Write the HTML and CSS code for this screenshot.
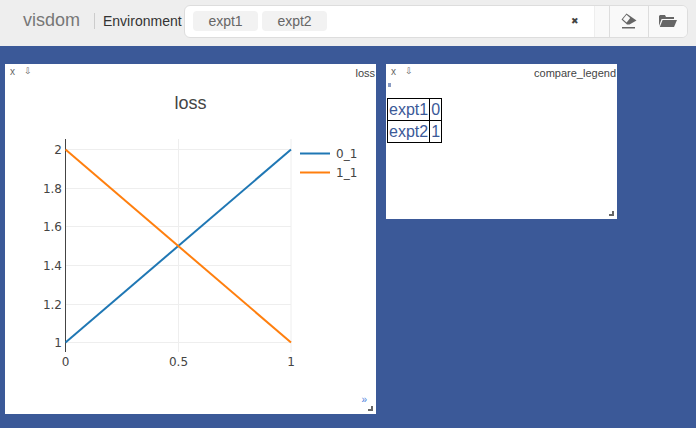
FILE: index.html
```html
<!DOCTYPE html>
<html>
<head>
	<meta charset="UTF-8">
	<title>visdom</title>
	<link rel="stylesheet" href="styles.css">
</head>
<body>
	<div class="navbar">
		<span class="brand">visdom</span>
		<span class="divider"></span>
		<span class="env-label">Environment</span>
		<div class="env-select">
			<div class="chips">
				<span class="chip">expt1</span>
				<span class="chip">expt2</span>
			</div>
			<span class="clear">&#10006;</span>
			<span class="gap-btn"></span>
			<button class="tool-btn">
				<svg width="18" height="18" viewBox="0 0 18 18">
					<path d="M6.5 1.5 L1.5 7.5 L7 12.5 L9.5 12.5 L16.5 8.5 Z" fill="#666"/>
					<path d="M6.5 2.8 L2.9 7.2 L6.6 10.4 L10.2 6 Z" fill="#f8f8f8"/>
					<rect x="2" y="15" width="13" height="1.5" fill="#666"/>
				</svg>
			</button>
			<button class="tool-btn">
				<svg width="20" height="18" viewBox="0 0 20 18">
					<path d="M1 4 L1 14 L3.6 7 L16 7 L16 5 L8 5 L7 3 L2 3 Z" fill="#666"/>
					<path d="M4.6 8 L19 8 L16 15 L1.8 15 Z" fill="#666"/>
				</svg>
			</button>
		</div>
	</div>

	<div class="desktop">
		<div class="pane pane-plot">
			<div class="pane-bar">
				<span class="pane-x">x</span>
				<span class="pane-save">&#8681;</span>
				<span class="pane-title">loss</span>
			</div>
			<svg class="plot" width="371" height="350" viewBox="0 0 371 350">
				<text class="plot-title" x="185.500" y="45" text-anchor="middle">loss</text>

				<!-- grid -->
				<g class="grid">
					<line x1="173.500" y1="75" x2="173.500" y2="288"/>
					<line x1="286" y1="75" x2="286" y2="288"/>
					<line x1="60" y1="85.500" x2="286" y2="85.500"/>
					<line x1="60" y1="124.500" x2="286" y2="124.500"/>
					<line x1="60" y1="162.500" x2="286" y2="162.500"/>
					<line x1="60" y1="201.500" x2="286" y2="201.500"/>
					<line x1="60" y1="240.500" x2="286" y2="240.500"/>
					<line x1="60" y1="278.500" x2="286" y2="278.500"/>
				</g>
				<line class="axis" x1="60.500" y1="75" x2="60.500" y2="288"/>

				<!-- traces -->
				<line class="trace-blue" x1="60.500" y1="278.500" x2="286" y2="85.500"/>
				<line class="trace-orange" x1="60.500" y1="85.500" x2="286" y2="278.500"/>

				<!-- ticks -->
				<g class="tick" text-anchor="end">
					<text x="57" y="90">2</text>
					<text x="57" y="129">1.8</text>
					<text x="57" y="167">1.6</text>
					<text x="57" y="206">1.4</text>
					<text x="57" y="245">1.2</text>
					<text x="57" y="283">1</text>
				</g>
				<g class="tick" text-anchor="middle">
					<text x="60.500" y="302">0</text>
					<text x="173.500" y="302">0.5</text>
					<text x="286" y="302">1</text>
				</g>

				<!-- legend -->
				<line class="trace-blue" x1="295" y1="89.500" x2="325" y2="89.500"/>
				<line class="trace-orange" x1="295" y1="108.500" x2="325" y2="108.500"/>
				<text class="tick" x="331" y="94">0_1</text>
				<text class="tick" x="331" y="113">1_1</text>
			</svg>
			<span class="more">&raquo;</span>
			<span class="resize"></span>
		</div>

		<div class="pane pane-legend">
			<div class="pane-bar">
				<span class="pane-x">x</span>
				<span class="pane-save">&#8681;</span>
				<span class="pane-title">compare_legend</span>
			</div>
			<div class="pane-body">
				<span class="dot"></span>
				<table class="compare">
					<tr><td>expt1</td><td>0</td></tr>
					<tr><td>expt2</td><td>1</td></tr>
				</table>
			</div>
			<span class="resize"></span>
		</div>
	</div>
</body>
</html>
```

FILE: styles.css
```css
html, body {
	margin: 0;
	height: 100%;
}
body {
	font-family: "Liberation Sans", Arial, sans-serif;
	background-color: #3b5998;
	overflow: hidden;
}

/* Top bar */
.navbar {
	display: flex;
	align-items: center;
	height: 46px;
	box-sizing: border-box;
	padding: 0 8px 5px 23px;
	background-color: #eeeeee;
}
.brand {
	font-size: 18px;
	color: #777;
	width: 71px;
}
.divider {
	width: 1px;
	height: 16px;
	background-color: #ccc;
}
.env-label {
	font-size: 14px;
	color: #333;
	margin: 0 4px 0 8px;
	width: 77px;
}
.env-select {
	display: flex;
	align-items: stretch;
	flex: 1;
	height: 33px;
	margin-top: 1px;
	box-sizing: border-box;
	border: 1px solid #ddd;
	border-radius: 6px;
	background-color: #fff;
	overflow: hidden;
}
.chips {
	display: flex;
	align-items: center;
	gap: 4px;
	flex: 1;
	padding-left: 8px;
}
.chip {
	width: 65px;
	height: 20px;
	line-height: 20px;
	text-align: center;
	font-size: 14px;
	color: #666;
	background-color: #f2f2f2;
	border-radius: 4px;
}
.clear {
	align-self: center;
	width: 23px;
	font-size: 9px;
	color: #444;
}
.gap-btn {
	width: 14px;
	background-color: #f9f9f9;
	border-left: 1px solid #eee;
}
.tool-btn {
	width: 39px;
	padding: 0;
	border: none;
	border-left: 1px solid #ddd;
	background-color: #f9f9f9;
	display: flex;
	align-items: center;
	justify-content: center;
}

/* Panes */
.desktop {
	display: flex;
	align-items: flex-start;
	gap: 10px;
	padding: 18px 5px 0;
}
.pane {
	position: relative;
	background-color: #fff;
}
.pane-plot {
	width: 371px;
	height: 350px;
}
.pane-legend {
	width: 231px;
	height: 155px;
}
.pane-bar {
	position: absolute;
	top: 0;
	left: 0;
	right: 0;
	display: flex;
	align-items: center;
	height: 14px;
	font-size: 10px;
	color: #666;
}
.pane-x {
	margin-left: 5px;
	width: 14px;
}
.pane-save {
	font-size: 9px;
}
.pane-title {
	margin-left: auto;
	margin-right: 1px;
	color: #444;
	font-size: 11px;
	margin-top: 3px;
}
.pane-legend .pane-x {
	margin-left: 5px;
}

.plot {
	display: block;
}
.plot-title {
	font-family: "Liberation Sans", Arial, sans-serif;
	font-size: 18px;
	fill: #444;
}
.grid line {
	stroke: #eeeeee;
	stroke-width: 1;
}
.axis {
	stroke: #444;
	stroke-width: 1;
}
.trace-blue {
	stroke: #1f77b4;
	stroke-width: 2;
}
.trace-orange {
	stroke: #ff7f0e;
	stroke-width: 2;
}
.tick {
	font-family: "DejaVu Sans", sans-serif;
	font-size: 12px;
	fill: #444;
}
.more {
	position: absolute;
	right: 9px;
	bottom: 9px;
	font-size: 10px;
	line-height: 10px;
	color: #447adb;
}
.resize {
	position: absolute;
	right: 3px;
	bottom: 3px;
	width: 3px;
	height: 3px;
	border-right: 2px solid #666;
	border-bottom: 2px solid #666;
}

.pane-body {
	padding: 19px 1px 0;
}
.dot {
	display: block;
	width: 3px;
	height: 4px;
	margin-left: 1px;
	background-color: #8a9cc4;
}
.compare {
	margin-top: 11px;
	border-collapse: collapse;
	font-size: 16px;
	color: #3b5998;
}
.compare td {
	padding: 0 1px;
	height: 21px;
	border: 1px solid #000;
	line-height: 20px;
}
```
